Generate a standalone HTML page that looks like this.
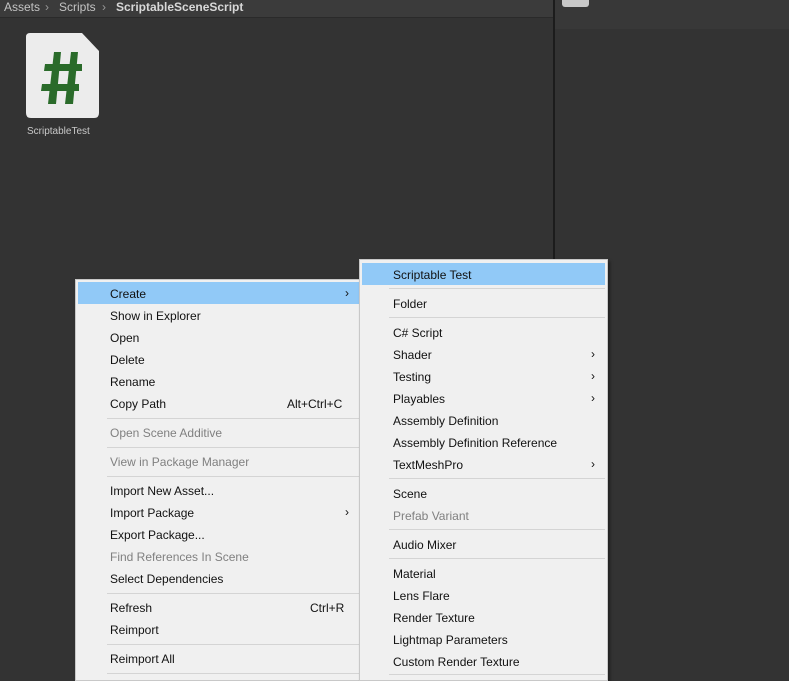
<!DOCTYPE html>
<html><head><style>
body{margin:0;width:789px;height:676px;overflow:hidden;background:#333;font-family:"Liberation Sans",sans-serif;position:relative}
.a{position:absolute}
.bc{left:0;top:0;width:553px;height:17px;background:#3b3b3b;border-bottom:1px solid #2a2a2a;color:#c4c4c4;font-size:12px;line-height:15px}
.menu{background:#f0f0f0;border:1px solid #c8c8c8;box-shadow:2px 2px 3px rgba(0,0,0,.4)}
.t{position:absolute;font-size:12px;color:#111;white-space:nowrap;line-height:14px}
.g{color:#808080}
.hl{position:absolute;background:#91c9f7}
.sep{position:absolute;height:1px;background:#d4d4d4}
</style></head><body>
<div class="a bc"><span style="position:absolute;left:4px">Assets</span><span style="position:absolute;left:45px;color:#999">›</span><span style="position:absolute;left:59px">Scripts</span><span style="position:absolute;left:102px;color:#999">›</span><span style="position:absolute;left:116px;font-weight:bold;color:#d8d8d8">ScriptableSceneScript</span></div>
<div class="a" style="left:553px;top:0;width:2px;height:676px;background:#1c1c1c"></div>
<div class="a" style="left:555px;top:0;width:234px;height:29px;background:#383838"></div>
<div class="a" style="left:562px;top:0;width:27px;height:7px;background:#c8c8c8;border-radius:0 0 3px 3px"></div>
<svg class="a" style="left:26px;top:33px" width="74" height="86"><path d="M4 0H56L73 18V80Q73 85 68 85H5Q0 85 0 80V4Q0 0 4 0Z" fill="#ececec"/>
<g fill="#2a6b2a"><path d="M28 19H35L30 71H22Z"/><path d="M45 19H52L47 71H39Z"/><path d="M19 31H56V38H18Z"/><path d="M16 51H53V58H15Z"/></g></svg>
<div class="a" style="left:27px;top:126px;font-size:10px;color:#c8c8c8">ScriptableTest</div>

<div class="a menu" style="left:75px;top:279px;width:284px;height:400px">
<div class="hl" style="left:2px;top:2px;width:281px;height:22px"></div>
<div class="t" style="left:34px;top:7px">Create</div><div class="t" style="left:269px;top:6px">›</div>
<div class="t" style="left:34px;top:29px">Show in Explorer</div>
<div class="t" style="left:34px;top:51px">Open</div>
<div class="t" style="left:34px;top:73px">Delete</div>
<div class="t" style="left:34px;top:95px">Rename</div>
<div class="t" style="left:34px;top:117px">Copy Path</div><div class="t" style="left:211px;top:117px">Alt+Ctrl+C</div>
<div class="sep" style="left:31px;top:138px;width:252px"></div>
<div class="t g" style="left:34px;top:146px">Open Scene Additive</div>
<div class="sep" style="left:31px;top:167px;width:252px"></div>
<div class="t g" style="left:34px;top:175px">View in Package Manager</div>
<div class="sep" style="left:31px;top:196px;width:252px"></div>
<div class="t" style="left:34px;top:204px">Import New Asset...</div>
<div class="t" style="left:34px;top:226px">Import Package</div><div class="t" style="left:269px;top:225px">›</div>
<div class="t" style="left:34px;top:248px">Export Package...</div>
<div class="t g" style="left:34px;top:270px">Find References In Scene</div>
<div class="t" style="left:34px;top:292px">Select Dependencies</div>
<div class="sep" style="left:31px;top:313px;width:252px"></div>
<div class="t" style="left:34px;top:321px">Refresh</div><div class="t" style="left:234px;top:321px">Ctrl+R</div>
<div class="t" style="left:34px;top:343px">Reimport</div>
<div class="sep" style="left:31px;top:364px;width:252px"></div>
<div class="t" style="left:34px;top:372px">Reimport All</div>
<div class="sep" style="left:31px;top:393px;width:252px"></div>
</div>

<div class="a menu" style="left:359px;top:259px;width:247px;height:420px">
<div class="hl" style="left:2px;top:3px;width:243px;height:22px"></div>
<div class="t" style="left:33px;top:8px">Scriptable Test</div>
<div class="sep" style="left:29px;top:28px;width:216px"></div>
<div class="t" style="left:33px;top:37px">Folder</div>
<div class="sep" style="left:29px;top:57px;width:216px"></div>
<div class="t" style="left:33px;top:66px">C# Script</div>
<div class="t" style="left:33px;top:88px">Shader</div><div class="t" style="left:231px;top:87px">›</div>
<div class="t" style="left:33px;top:110px">Testing</div><div class="t" style="left:231px;top:109px">›</div>
<div class="t" style="left:33px;top:132px">Playables</div><div class="t" style="left:231px;top:131px">›</div>
<div class="t" style="left:33px;top:154px">Assembly Definition</div>
<div class="t" style="left:33px;top:176px">Assembly Definition Reference</div>
<div class="t" style="left:33px;top:198px">TextMeshPro</div><div class="t" style="left:231px;top:197px">›</div>
<div class="sep" style="left:29px;top:218px;width:216px"></div>
<div class="t" style="left:33px;top:227px">Scene</div>
<div class="t g" style="left:33px;top:249px">Prefab Variant</div>
<div class="sep" style="left:29px;top:269px;width:216px"></div>
<div class="t" style="left:33px;top:278px">Audio Mixer</div>
<div class="sep" style="left:29px;top:298px;width:216px"></div>
<div class="t" style="left:33px;top:307px">Material</div>
<div class="t" style="left:33px;top:329px">Lens Flare</div>
<div class="t" style="left:33px;top:351px">Render Texture</div>
<div class="t" style="left:33px;top:373px">Lightmap Parameters</div>
<div class="t" style="left:33px;top:395px">Custom Render Texture</div>
<div class="sep" style="left:29px;top:414px;width:216px"></div>
</div>
</body></html>
